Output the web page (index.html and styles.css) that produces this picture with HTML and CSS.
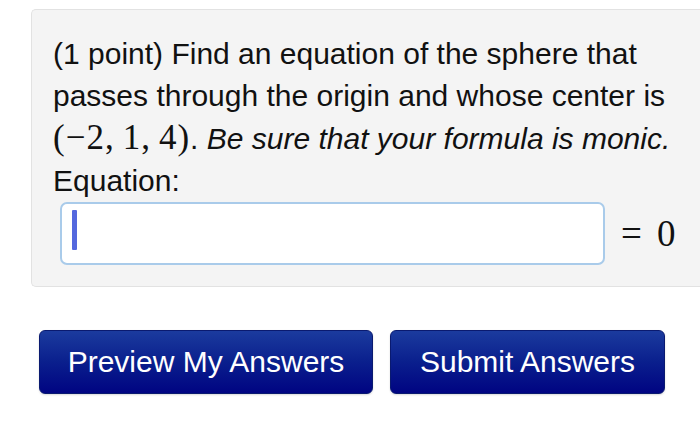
FILE: index.html
```html
<!DOCTYPE html>
<html>
<head>
<meta charset="utf-8">
<link rel="stylesheet" href="styles.css">
</head>
<body>
<div class="problem">
  <p class="text">(1 point) Find an equation of the sphere that passes through the origin and whose center is <span class="math">(&minus;2,&thinsp;1,&thinsp;4)</span>. <em>Be sure that your formula is monic.</em></p>
  <div class="label">Equation:</div>
  <div class="answer-row">
    <div class="input"><span class="caret"></span></div>
    <span class="math eq">= 0</span>
  </div>
</div>
<div class="buttons">
  <button class="btn btn-preview">Preview My Answers</button>
  <button class="btn btn-submit">Submit Answers</button>
</div>
</body>
</html>
```
FILE: styles.css
```css
html, body {
  margin: 0;
  padding: 0;
  background: #ffffff;
  overflow: hidden;
}
body {
  font-family: "Liberation Sans", Arial, sans-serif;
  color: #111111;
  width: 700px;
  height: 436px;
}
.problem {
  margin: 9px 0 0 31px;
  width: 700px;
  height: 278px;
  box-sizing: border-box;
  background: #f4f4f4;
  border: 1px solid #e2e2e2;
  border-right: none;
  border-radius: 5px 0 0 5px;
  padding: 23px 0 0 21px;
}
.text {
  margin: 0;
  width: 640px;
  font-size: 30px;
  line-height: 42px;
}
.math {
  font-family: "Liberation Serif", "Times New Roman", serif;
  font-size: 35px;
  letter-spacing: 1px;
}
.text em {
  font-style: italic;
}
.label {
  font-size: 30px;
  line-height: 42px;
}
.answer-row {
  display: flex;
  align-items: center;
  margin-top: 0;
  margin-left: 7px;
}
.input {
  width: 545px;
  height: 63px;
  box-sizing: border-box;
  background: #ffffff;
  border: 2px solid #a9cbea;
  border-radius: 7px;
  padding: 6px 0 0 10px;
}
.caret {
  display: block;
  width: 5px;
  height: 40px;
  background: #5468de;
  border-radius: 1px;
}
.eq {
  margin-left: 16px;
  font-size: 37px;
  letter-spacing: 3px;
}
.buttons {
  display: flex;
  gap: 17px;
  margin: 43px 0 0 39px;
}
.btn {
  height: 64px;
  border: 1px solid #0a1a70;
  border-radius: 6px;
  background: linear-gradient(#1b3b9e, #0a1f8d 50%, #000482);
  color: #ffffff;
  font-family: "Liberation Sans", Arial, sans-serif;
  font-size: 30px;
  padding: 0;
  box-shadow: 0 1px 2px rgba(0,0,0,0.15);
}
.btn-preview {
  width: 334px;
}
.btn-submit {
  width: 275px;
}
```
